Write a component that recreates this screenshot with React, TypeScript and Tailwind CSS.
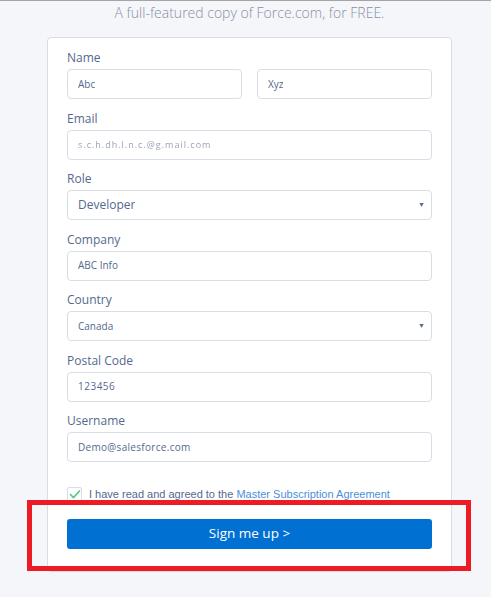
import React from 'react';

const font = { fontFamily: '"Open Sans", "Liberation Sans", sans-serif' };

function Label({ children }: { children: React.ReactNode }) {
  return <div className="text-[12px] leading-[18px] text-[#54698d] mb-[2px]">{children}</div>;
}

function Box({ children, select, className = '' }: { children?: React.ReactNode; select?: boolean; className?: string }) {
  return (
    <div
      className={`h-[30px] border border-[#d8dde6] rounded-[4px] bg-white flex items-center justify-between pl-[10px] pr-[6px] text-[#54698d] ${className}`}
    >
      <div className="truncate">{children}</div>
      {select && <span className="text-[7px] text-[#54698d]">▼</span>}
    </div>
  );
}

export default function App() {
  return (
    <div className="relative h-screen overflow-hidden bg-[#f4f6fa] border-t border-[#a5a5a5]" style={font}>
      <div className="ml-[8px]">
        <p className="text-center text-[14px] font-light text-[#8a8fa3] pt-[2px] leading-[20px]">
          A full-featured copy of Force.com, for FREE.
        </p>

        <div className="mx-[39px] mt-[14px] bg-white border border-[#d8dde6] rounded-[4px] px-[19px] pt-[11px] pb-[22px]">
          <div className="flex flex-col gap-[10.5px]">
            <div>
              <Label>Name</Label>
              <div className="flex gap-[15px]">
                <Box className="flex-1 text-[10px]">Abc</Box>
                <Box className="flex-1 text-[10px]">Xyz</Box>
              </div>
            </div>
            <div>
              <Label>Email</Label>
              <Box className="text-[9px]">
                <span className="text-[#9aa3b5] tracking-[1px] blur-[0.4px]">s.c.h.dh.l.n.c.@g.mail.com</span>
              </Box>
            </div>
            <div>
              <Label>Role</Label>
              <Box select className="text-[12px]">Developer</Box>
            </div>
            <div>
              <Label>Company</Label>
              <Box className="text-[10px]">ABC Info</Box>
            </div>
            <div>
              <Label>Country</Label>
              <Box select className="text-[10px]">Canada</Box>
            </div>
            <div>
              <Label>Postal Code</Label>
              <Box className="text-[10px] tracking-[0.5px]">123456</Box>
            </div>
            <div>
              <Label>Username</Label>
              <Box className="text-[10px] tracking-[0.3px]">Demo@salesforce.com</Box>
            </div>
          </div>

          <div className="flex items-center mt-[24px] gap-[7px]">
            <div className="w-[15px] h-[15px] shrink-0 border border-[#d8dde6] rounded-[2px] flex items-center justify-center">
              <svg width="12" height="10" viewBox="0 0 12 10">
                <path d="M1 5 L4.5 8.5 L11 1.5" fill="none" stroke="#4bca81" strokeWidth="1.6" />
              </svg>
            </div>
            <span className="text-[11px] whitespace-nowrap text-[#54698d]" style={{ fontFamily: '"Liberation Sans", sans-serif' }}>
              I have read and agreed to the <span className="text-[#4a90d9]">Master Subscription Agreement</span>
            </span>
          </div>

          <button className="mt-[16px] w-full h-[30px] bg-[#0070d2] rounded-[3px] text-white text-[13.5px]">
            Sign me up &gt;
          </button>
        </div>
      </div>

      <div className="absolute left-[27px] top-[499px] w-[444px] h-[71px] border-[5px] border-[#ed1c24] pointer-events-none" />
    </div>
  );
}
